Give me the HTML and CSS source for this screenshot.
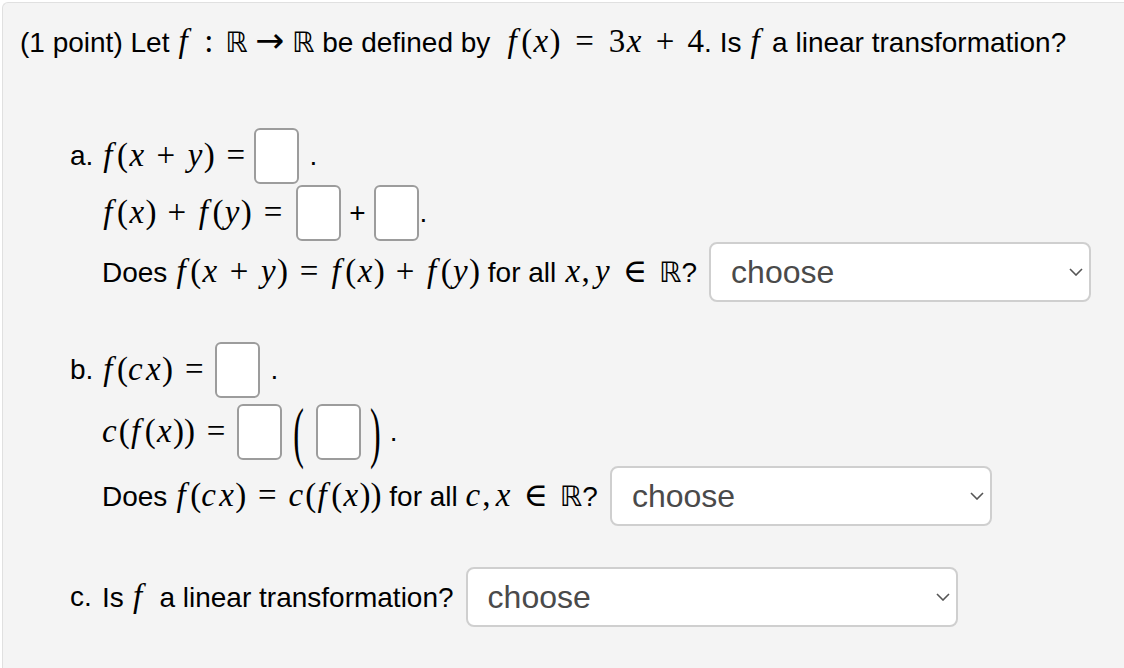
FILE: index.html
```html
<!DOCTYPE html>
<html lang="en">
<head>
<meta charset="utf-8">
<title>Linear transformation</title>
<link rel="stylesheet" href="styles.css">
</head>
<body>
<div class="problem">
  <p class="title">(1 point) Let <span class="m"><i class="v f">f</i><span class="rel">:</span><span class="bb">ℝ</span><span class="rel arrow">→</span><span class="bb">ℝ</span></span> be defined by <span class="m m-wide"><i class="v f">f</i>(<i class="v">x</i>)<span class="rel">=</span>3<i class="v">x</i><span class="bin">+</span>4</span>. Is <span class="m"><i class="v f">f</i></span> a linear transformation?</p>

  <div class="part part-a">
    <div class="row">
      <span class="label">a.</span>
      <span class="txt"><span class="m"><i class="v f">f</i>(<i class="v">x</i><span class="bin">+</span><i class="v">y</i>)<span class="rel eq">=</span></span></span>
      <input class="ans push" type="text" aria-label="answer 1">
      <span class="txt dot">.</span>
    </div>
    <div class="row indent">
      <span class="txt"><span class="m"><i class="v f">f</i>(<i class="v">x</i>)<span class="bin">+</span><i class="v f">f</i>(<i class="v">y</i>)<span class="rel">=</span></span></span>
      <input class="ans push" type="text" aria-label="answer 2">
      <span class="txt plus">+</span>
      <input class="ans" type="text" aria-label="answer 3">
      <span class="txt dot dot-tight">.</span>
    </div>
    <div class="row indent sel-row">
      <span class="txt">Does <span class="m"><i class="v f">f</i>(<i class="v">x</i><span class="bin">+</span><i class="v">y</i>)<span class="rel">=</span><i class="v f">f</i>(<i class="v">x</i>)<span class="bin">+</span><i class="v f">f</i>(<i class="v">y</i>)</span> for all <span class="m"><i class="v">x</i><span class="comma">,</span><i class="v">y</i><span class="rel">∈</span><span class="bb">ℝ</span></span>?</span>
      <span class="sel-wrap">
        <select class="sel sel-382" aria-label="choice 1"><option>choose</option><option>yes</option><option>no</option></select>
        <svg class="chev" viewBox="0 0 14 8" aria-hidden="true"><path d="M1 1 L7 7 L13 1" /></svg>
      </span>
    </div>
  </div>

  <div class="part part-b">
    <div class="row">
      <span class="label">b.</span>
      <span class="txt"><span class="m"><i class="v f">f</i>(<i class="v c">c</i><i class="v">x</i>)<span class="rel">=</span></span></span>
      <input class="ans" type="text" aria-label="answer 4">
      <span class="txt dot">.</span>
    </div>
    <div class="row indent paren-row">
      <span class="txt"><span class="m"><i class="v c">c</i>(<i class="v f">f</i>(<i class="v">x</i>))<span class="rel">=</span></span></span>
      <input class="ans" type="text" aria-label="answer 5">
      <span class="bigp lp">(</span>
      <input class="ans" type="text" aria-label="answer 6">
      <span class="bigp rp">)</span>
      <span class="txt dot dot-paren">.</span>
    </div>
    <div class="row indent sel-row">
      <span class="txt">Does <span class="m"><i class="v f">f</i>(<i class="v c">c</i><i class="v">x</i>)<span class="rel">=</span><i class="v c">c</i>(<i class="v f">f</i>(<i class="v">x</i>))</span> for all <span class="m"><i class="v c">c</i><span class="comma">,</span><i class="v">x</i><span class="rel">∈</span><span class="bb">ℝ</span></span>?</span>
      <span class="sel-wrap">
        <select class="sel sel-382" aria-label="choice 2"><option>choose</option><option>yes</option><option>no</option></select>
        <svg class="chev" viewBox="0 0 14 8" aria-hidden="true"><path d="M1 1 L7 7 L13 1" /></svg>
      </span>
    </div>
  </div>

  <div class="part part-c">
    <div class="row sel-row">
      <span class="label">c.</span>
      <span class="txt">Is <span class="m"><i class="v f f-gap">f</i></span> a linear transformation?</span>
      <span class="sel-wrap">
        <select class="sel sel-492" aria-label="choice 3"><option>choose</option><option>yes</option><option>no</option></select>
        <svg class="chev" viewBox="0 0 14 8" aria-hidden="true"><path d="M1 1 L7 7 L13 1" /></svg>
      </span>
    </div>
  </div>
</div>
</body>
</html>
```

FILE: styles.css
```css
html, body {
  margin: 0;
  padding: 0;
  background: #ffffff;
  overflow: hidden;
}

body {
  font-family: "Liberation Sans", Arial, Helvetica, sans-serif;
  font-size: 28px;
  color: #000;
}

.problem {
  box-sizing: border-box;
  margin: 2px 0 0 2px;
  width: calc(100vw - 2px);
  min-height: calc(100vh - 2px);
  background: #f4f4f4;
  border: 1px solid #e0e0e0;
  border-right: 0;
  border-bottom: 0;
  border-radius: 6px 0 0 0;
  padding: 20px 17px 0 17px;
}

.title {
  margin: 0;
  line-height: 32px;
  white-space: nowrap;
}

/* math */
.m {
  font-family: "Liberation Serif", "DejaVu Serif", serif;
  font-size: 33px;
  line-height: 1;
}

.v {
  font-style: italic;
  padding: 0 0.04em;
}

.f {
  padding-right: 0.14em;
}

.f-gap {
  margin-right: 5px;
}

.v.c {
  padding: 0 0.06em 0 0;
}

.bin {
  margin: 0 0.34em;
}

.rel {
  margin: 0 0.36em;
}

.rel.eq {
  margin-right: 0.22em;
}

.arrow {
  font-family: "DejaVu Sans", sans-serif;
  font-size: 1.05em;
  margin: 0 0.22em;
}

.m-wide {
  margin-left: 8px;
}

.m-wide .rel {
  margin: 0 0.45em;
}

.m-wide .bin {
  margin: 0 0.4em;
}

.comma {
  margin-right: 0.12em;
}

.bb {
  font-family: "DejaVu Sans", sans-serif;
  font-size: 0.86em;
}

/* parts */
.part {
  display: flex;
  flex-direction: column;
  margin-left: 50px;
}

.part-a {
  margin-top: 69px;
  gap: 1px;
}

.part-b {
  margin-top: 40px;
  gap: 4px;
}

.part-c {
  margin-top: 41px;
}

.row {
  display: flex;
  align-items: center;
  height: 56px;
  white-space: nowrap;
}

.sel-row,
.paren-row {
  height: 60px;
}

.indent {
  padding-left: 32px;
}

.label {
  flex: none;
  width: 32px;
  line-height: 32px;
}

.txt {
  line-height: 32px;
}

.ans {
  box-sizing: border-box;
  flex: none;
  width: 45px;
  height: 56px;
  margin: 0;
  padding: 0;
  border: 2px solid #9c9c9c;
  border-radius: 6px;
  background: #fff;
}

.ans.push {
  margin-left: 2px;
}

.dot {
  margin-left: 10px;
}

.dot-tight {
  margin-left: 1px;
}

.plus {
  margin: 0 8px;
}

.bigp {
  display: inline-block;
  font-family: "Liberation Serif", "DejaVu Serif", serif;
  font-size: 32px;
  line-height: 32px;
  transform: scaleY(2.1);
}

.lp {
  margin: 0 12px 0 11px;
}

.rp {
  margin: 0 2px 0 9px;
}

.dot-paren {
  margin-left: 7px;
}

/* selects */
.sel-wrap {
  position: relative;
  display: inline-block;
  flex: none;
  margin-left: 12px;
  height: 60px;
}

.sel {
  -webkit-appearance: none;
  appearance: none;
  box-sizing: border-box;
  height: 60px;
  margin: 0;
  padding: 0 0 0 20px;
  border: 2px solid #cfcfcf;
  border-radius: 8px;
  background: #fff;
  font-family: "Liberation Sans", Arial, sans-serif;
  font-size: 32px;
  color: #4a4a4a;
}

.sel-382 {
  width: 382px;
}

.sel-492 {
  width: 492px;
}

.chev {
  position: absolute;
  right: 8px;
  top: 50%;
  width: 14px;
  height: 8px;
  margin-top: -4px;
  pointer-events: none;
}

.chev path {
  fill: none;
  stroke: #555;
  stroke-width: 1.6;
}
```
